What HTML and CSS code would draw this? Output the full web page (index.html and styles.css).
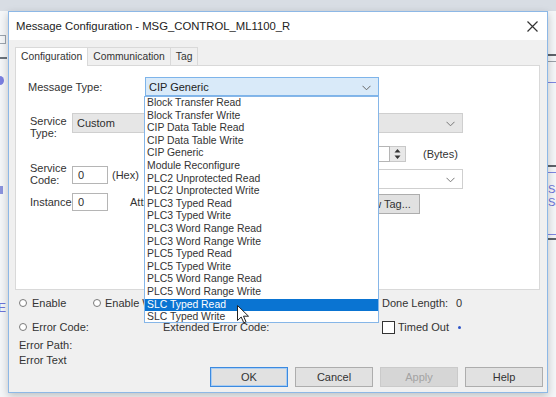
FILE: index.html
```html
<!DOCTYPE html>
<html>
<head>
<meta charset="utf-8">
<link rel="stylesheet" href="styles.css">
</head>
<body>
<div class="desktop">
  <div class="bgbit bg-l1"></div>
  <div class="bgbit bg-l2"></div>
  <div class="bgbit bg-l3"></div>
  <div class="bgbit bg-l4"></div>
  <div class="bgbit bg-le">E</div>
  <div class="bgbit bg-r1"></div>
  <div class="bgbit bg-r2"></div>
  <div class="bgbit bg-r3"></div>
  <div class="bgbit bg-r4"></div>
  <div class="bgbit bg-rt">Sa<br>Sa</div>
  <div class="bgbit bg-r5"></div>
  <div class="bgbit bg-r6"></div>
  <div class="bgbit bg-r7"></div>

  <div class="dialog">
    <div class="titlebar">
      <span class="title">Message Configuration - MSG_CONTROL_ML1100_R</span>
      <svg class="close" width="11" height="11" viewBox="0 0 11 11"><path d="M0.5 0.5 L10.5 10.5 M10.5 0.5 L0.5 10.5" stroke="#333" stroke-width="1.2" fill="none"/></svg>
    </div>
    <div class="tabs">
      <div class="tab active">Configuration</div>
      <div class="tab">Communication</div>
      <div class="tab">Tag</div>
    </div>
    <div class="panel">
      <div class="row1">
        <span class="lbl lbl-msg">Message Type:</span>
        <div class="combo combo-focus"><span>CIP Generic</span>
          <svg class="chev" width="9" height="6" viewBox="0 0 9 6"><path d="M0.5 0.8 L4.5 4.8 L8.5 0.8" stroke="#666" fill="none"/></svg>
        </div>
      </div>
      <div class="srow">
        <span class="lbl lbl2">Service<br>Type:</span>
        <div class="combo combo-gray"><span>Custom</span>
          <svg class="chev" width="9" height="6" viewBox="0 0 9 6"><path d="M0.5 0.8 L4.5 4.8 L8.5 0.8" stroke="#777" fill="none"/></svg>
        </div>
      </div>
      <div class="split">
        <div class="lcol">
          <div class="frow">
            <span class="lbl lbl2 lbl-code">Service<br>Code:</span>
            <div class="input">0</div>
            <span class="lbl hex">(Hex)</span>
          </div>
          <div class="frow frow2">
            <span class="lbl lbl-inst">Instance:</span>
            <div class="input">0</div>
            <span class="lbl attr">Attribute:</span>
          </div>
        </div>
        <div class="rcol">
          <div class="spinrow">
            <div class="input spin-in">0</div>
            <div class="spin">
              <svg width="7" height="12" viewBox="0 0 7 12"><path d="M3.5 1 L6.5 4.5 L0.5 4.5 Z M3.5 11 L6.5 7.5 L0.5 7.5 Z" fill="#333"/></svg>
            </div>
            <span class="lbl bytes">(Bytes)</span>
          </div>
          <div class="combo combo-white">
            <svg class="chev" width="9" height="6" viewBox="0 0 9 6"><path d="M0.5 0.8 L4.5 4.8 L8.5 0.8" stroke="#777" fill="none"/></svg>
          </div>
          <div class="btn newtag">New Tag...</div>
        </div>
      </div>
    </div>
    <div class="status">
      <div class="srow1">
        <span class="radio"></span><span class="st st-en">Enable</span>
        <span class="radio"></span><span class="st st-enw">Enable Waiting</span>
        <span class="st st-done">Done Length:</span><span class="st">0</span>
      </div>
      <div class="srow2">
        <span class="radio"></span><span class="st st-err">Error Code:</span>
        <span class="st st-ext">Extended Error Code:</span>
        <span class="check"></span><span class="st st-to">Timed Out</span>
        <span class="dot"></span>
      </div>
      <div class="srow3">Error Path:</div>
      <div class="srow4">Error Text</div>
      <div class="buttons">
        <div class="btn dbtn default">OK</div>
        <div class="btn dbtn">Cancel</div>
        <div class="btn dbtn disabled">Apply</div>
        <div class="btn dbtn">Help</div>
      </div>
    </div>

    <ul class="dropdown">
      <li>Block Transfer Read</li>
      <li>Block Transfer Write</li>
      <li>CIP Data Table Read</li>
      <li>CIP Data Table Write</li>
      <li>CIP Generic</li>
      <li>Module Reconfigure</li>
      <li>PLC2 Unprotected Read</li>
      <li>PLC2 Unprotected Write</li>
      <li>PLC3 Typed Read</li>
      <li>PLC3 Typed Write</li>
      <li>PLC3 Word Range Read</li>
      <li>PLC3 Word Range Write</li>
      <li>PLC5 Typed Read</li>
      <li>PLC5 Typed Write</li>
      <li>PLC5 Word Range Read</li>
      <li>PLC5 Word Range Write</li>
      <li class="sel">SLC Typed Read</li>
      <li>SLC Typed Write</li>
    </ul>
  </div>

  <svg class="cursor" width="13" height="19" viewBox="0 0 13 19"><path d="M0.5 0.5 L0.5 15.5 L4.2 12 L6.8 17.8 L9 16.8 L6.5 11.2 L11.5 11.2 Z" fill="#fff" stroke="#222" stroke-width="1"/></svg>
</div>
</body>
</html>
```

FILE: styles.css
```css
* { box-sizing: border-box; }
body { margin: 0; font-family: "Liberation Sans", Arial, sans-serif; color: #2e2e2e; }

.desktop {
  position: relative;
  width: 556px;
  height: 397px;
  overflow: hidden;
  padding: 11px 8px 0 8px;
  background: linear-gradient(#d8dde4 0, #d8dde4 11px, #f4f6f8 11px);
}

.bgbit { position: absolute; }
.bg-l1 { left: 0; top: 35px; width: 6px; height: 9px; border: 1px solid #9aa3ad; border-left: none; }
.bg-l2 { left: 0; top: 57px; width: 7px; height: 2px; background: #6b737c; }
.bg-l3 { left: -4px; top: 76px; width: 8px; height: 9px; border-radius: 50%; background: #7a7fe0; }
.bg-l4 { left: 0; top: 186px; width: 3px; height: 8px; background: #8b93dd; }
.bg-le { left: -2px; top: 301px; font-size: 12px; color: #6c74d9; }
.bg-r1 { left: 548px; top: 54px; width: 8px; height: 2px; background: #5d636a; }
.bg-r2 { left: 548px; top: 61px; width: 8px; height: 1px; background: #9aa0a8; }
.bg-r3 { left: 548px; top: 82px; width: 8px; height: 1px; background: #7e86e0; }
.bg-r4 { left: 548px; top: 165px; width: 8px; height: 2px; background: #5d636a; }
.bg-rt { left: 548px; top: 183px; font-size: 11px; line-height: 13px; color: #6a72d8; }
.bg-r5 { left: 548px; top: 172px; width: 8px; height: 1px; background: #7e86e0; }
.bg-r6 { left: 548px; top: 234px; width: 8px; height: 1px; background: #7e86e0; }
.bg-r7 { left: 548px; top: 238px; width: 8px; height: 2px; background: #5d636a; }

.dialog {
  position: relative;
  width: 540px;
  height: 382px;
  background: #f0f0f0;
  border: 1px solid #8db8e6;
  box-shadow: 0 3px 8px rgba(0, 0, 0, 0.22);
  display: flex;
  flex-direction: column;
}

.titlebar {
  height: 28px;
  background: #fff;
  display: flex;
  align-items: center;
  justify-content: space-between;
  padding: 0 9px 0 7px;
  font-size: 11.3px;
  color: #222;
}
.close { display: block; }

.tabs { display: flex; margin: 7px 0 0 6px; height: 18px; font-size: 10.3px; }
.tab {
  padding: 0 5px;
  line-height: 17px;
  border: 1px solid #d9d9d9;
  border-bottom: none;
  background: #f0f0f0;
  color: #333;
  margin-right: -1px;
}
.tab.active { background: #fff; position: relative; z-index: 1; height: 19px; }

.panel {
  margin: 0 7px 0 6px;
  height: 225px;
  background: #fff;
  border: 1px solid #d9d9d9;
  font-size: 11px;
}

.lbl { color: #333; font-size: 11px; }
.lbl2 { line-height: 11.5px; }

.row1 { display: flex; align-items: center; margin-top: 11px; padding-left: 12px; }
.lbl-msg { width: 117px; }

.combo {
  position: relative;
  height: 19px;
  display: flex;
  align-items: center;
  padding-left: 3px;
}
.combo .chev { position: absolute; right: 7px; top: 7px; }
.combo-focus { width: 234px; background: #d9eaf9; border: 1px solid #7eb4ea; color: #222; }
.combo-gray { width: 391px; height: 20px; background: #e6e6e6; border: 1px solid #cfcfcf; padding-left: 4px; }
.combo-gray .chev { top: 7px; }
.combo-white { width: 158px; height: 20px; background: #fff; border: 1px solid #cfcfcf; margin-top: 7px; }

.srow { display: flex; margin-top: 17px; padding-left: 14px; }
.srow .lbl2 { width: 42px; padding-top: 3px; }

.split { display: flex; margin-top: 7px; }
.lcol { width: 289px; padding-left: 14px; padding-top: 17px; }
.frow { display: flex; align-items: center; }
.frow2 { margin-top: 7px; }
.lbl-code { width: 42px; }
.lbl-inst { width: 42px; }
.input {
  width: 36px;
  height: 18px;
  border: 1px solid #b5b5b5;
  background: #fff;
  padding-left: 5px;
  line-height: 16px;
  font-size: 11px;
}
.hex { margin-left: 4px; }
.attr { margin-left: 22px; }

.rcol { width: 158px; }
.spinrow { display: flex; align-items: center; height: 16px; }
.spin-in { width: 85px; height: 16px; line-height: 14px; }
.spin {
  width: 16px;
  height: 16px;
  border: 1px solid #c8c8c8;
  border-left: none;
  background: #e8e8e8;
  display: flex;
  align-items: center;
  justify-content: center;
}
.bytes { margin-left: 17px; white-space: nowrap; }

.btn {
  height: 20px;
  background: #e1e1e1;
  border: 1px solid #adadad;
  display: flex;
  align-items: center;
  justify-content: center;
  font-size: 11px;
  color: #333;
}
.newtag { width: 70px; margin: 5px 0 0 45px; }

.status { padding-left: 10px; font-size: 11px; color: #333; }
.status .st { white-space: nowrap; }
.radio {
  width: 8px;
  height: 8px;
  border: 1px solid #7a7a7a;
  border-radius: 50%;
  background: #fff;
  flex: none;
}
.srow1 { display: flex; align-items: center; height: 14px; margin-top: 6px; }
.st-en { margin-left: 5px; width: 61px; }
.st-enw { margin-left: 4px; width: 277px; }
.st-done { width: 74px; }
.srow2 { display: flex; align-items: center; height: 14px; margin-top: 10px; }
.st-err { margin-left: 5px; width: 131px; }
.st-ext { width: 219px; }
.check { width: 13px; height: 13px; border: 1px solid #333; background: #fff; flex: none; }
.st-to { margin-left: 3px; width: 60px; }
.dot { width: 3px; height: 3px; background: #2d54c8; border-radius: 50%; }
.srow3 { height: 14px; line-height: 14px; margin-top: 4px; }
.srow4 { height: 14px; line-height: 14px; margin-top: 1px; }

.buttons { display: flex; justify-content: flex-end; gap: 7px; padding-right: 4px; margin-top: 0; }
.dbtn { width: 78px; height: 20px; }
.default { border: 1px solid #3c8ae0; box-shadow: inset 0 0 0 1px #a9cdf2; }
.disabled { background: #d6d6d6; border-color: #cacaca; color: #a3a3a3; }

.dropdown {
  position: absolute;
  left: 135px;
  top: 84px;
  width: 235px;
  height: 227px;
  margin: 0;
  padding: 0;
  list-style: none;
  background: #fff;
  border: 1px solid #86b6e8;
  font-size: 10.4px;
  color: #333;
}
.dropdown li { height: 12.6px; line-height: 12.6px; padding-left: 2px; white-space: nowrap; }
.dropdown li.sel { background: #0a74d2; color: #fff; }

.cursor { position: absolute; left: 237px; top: 305px; }
```
